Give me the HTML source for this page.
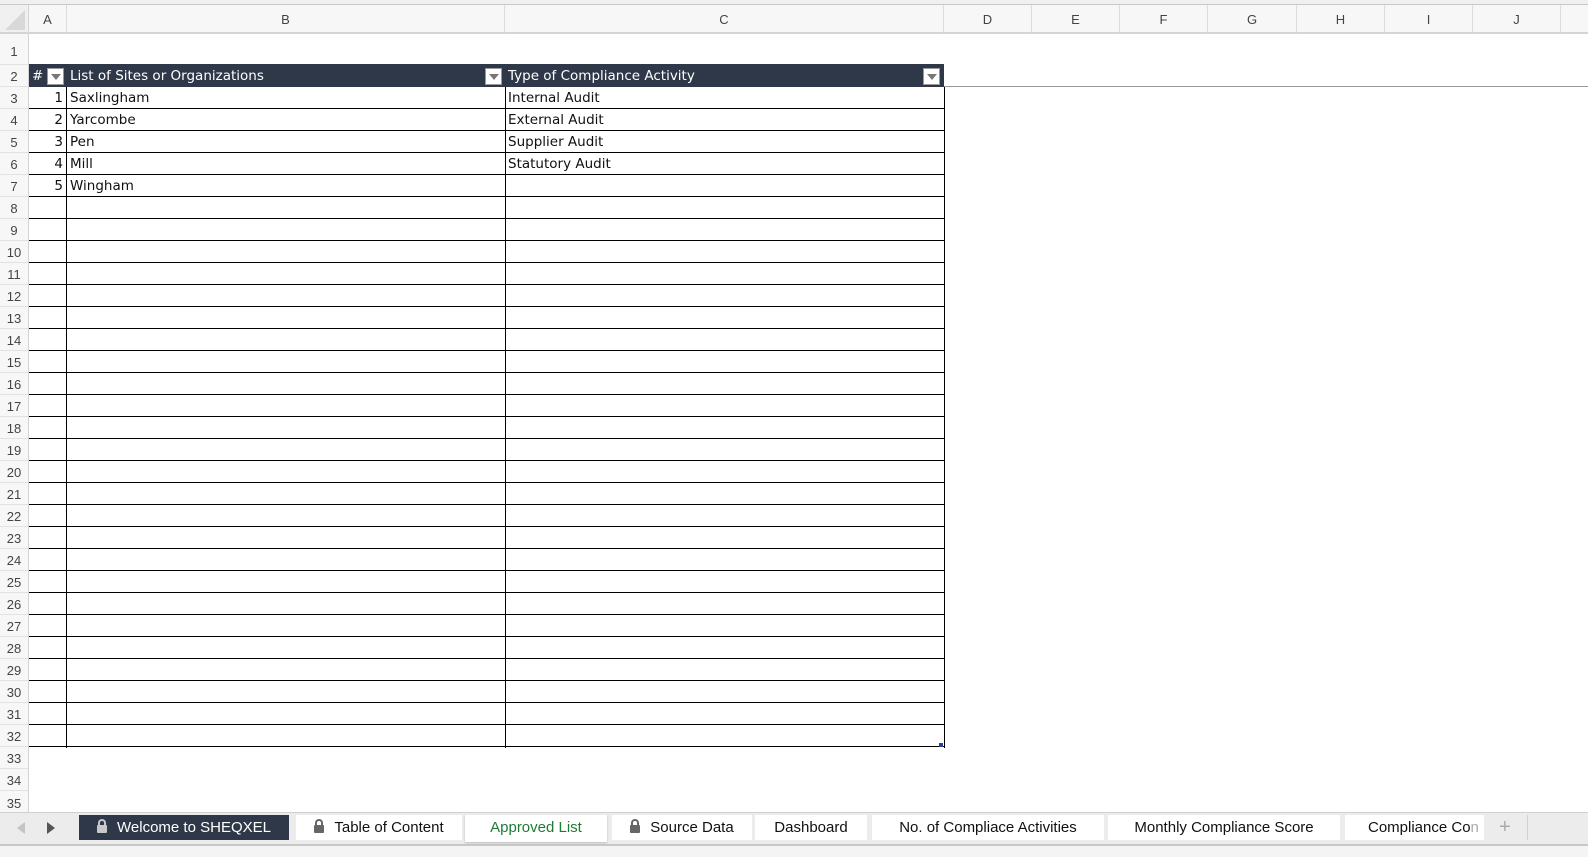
<!DOCTYPE html>
<html><head><meta charset="utf-8">
<style>
*{margin:0;padding:0;box-sizing:border-box}
body{width:1588px;height:857px;overflow:hidden;background:#fff;position:relative;font-family:"Liberation Sans",Arial,sans-serif;}
.a{position:absolute}
.ch{position:absolute;top:5px;height:29px;border-right:1px solid #dcdcdc;background:#f7f7f7;font-size:13px;color:#444;text-align:center;line-height:29px;border-bottom:2px solid #d4d4d4}
.rh{position:absolute;left:0;width:29px;background:#f7f7f7;border-bottom:1px solid #e2e2e2;border-right:1px solid #d4d4d4;font-size:13px;color:#444;text-align:center}
.cell{position:absolute;font-family:"DejaVu Sans","Liberation Sans",sans-serif;font-size:13.5px;color:#111;height:22px;line-height:22px;white-space:nowrap}
.hd{color:#fff}
.dd{position:absolute;top:68px;width:17px;height:17px;background:#fff;border:1px solid #999}
.dd:after{content:"";position:absolute;left:3px;top:5px;border-left:5px solid transparent;border-right:5px solid transparent;border-top:6px solid #777}
.tab{position:absolute;top:815px;height:25px;line-height:25px;font-size:15px;color:#111;text-align:center;background:#fff}
.lock{display:inline-block;width:10px;height:8px;background:currentColor;border-radius:1px;position:relative;margin-right:10px;vertical-align:-1px}
.lock:before{content:"";position:absolute;left:1px;top:-6px;width:8px;height:8px;border:2px solid currentColor;border-bottom:none;border-radius:4px 4px 0 0;box-sizing:border-box}
</style></head><body>
<div class="a" style="left:0;top:0;width:1588px;height:5px;background:#f0f0f0;border-bottom:1px solid #c8c8c8"></div>
<!-- corner -->
<div class="a" style="left:0;top:5px;width:29px;height:29px;background:#f0f0f0;border-right:1px solid #d4d4d4;border-bottom:2px solid #d4d4d4"></div>
<div class="a" style="left:5px;top:10px;width:0;height:0;border-left:20px solid transparent;border-bottom:20px solid #d8d8d8"></div>
<div class="ch" style="left:29px;width:38px">A</div>
<div class="ch" style="left:67px;width:438px">B</div>
<div class="ch" style="left:505px;width:439px">C</div>
<div class="ch" style="left:944px;width:88px">D</div>
<div class="ch" style="left:1032px;width:88px">E</div>
<div class="ch" style="left:1120px;width:88px">F</div>
<div class="ch" style="left:1208px;width:89px">G</div>
<div class="ch" style="left:1297px;width:88px">H</div>
<div class="ch" style="left:1385px;width:88px">I</div>
<div class="ch" style="left:1473px;width:88px">J</div>
<div class="ch" style="left:1561px;width:27px;border-right:none"></div>
<!-- row headers -->
<div class="rh" style="top:34px;height:31px;line-height:36px">1</div>
<div class="rh" style="top:65px;height:22px;line-height:24px">2</div>
<div class="rh" style="top:87px;height:22px;line-height:24px">3</div>
<div class="rh" style="top:109px;height:22px;line-height:24px">4</div>
<div class="rh" style="top:131px;height:22px;line-height:24px">5</div>
<div class="rh" style="top:153px;height:22px;line-height:24px">6</div>
<div class="rh" style="top:175px;height:22px;line-height:24px">7</div>
<div class="rh" style="top:197px;height:22px;line-height:24px">8</div>
<div class="rh" style="top:219px;height:22px;line-height:24px">9</div>
<div class="rh" style="top:241px;height:22px;line-height:24px">10</div>
<div class="rh" style="top:263px;height:22px;line-height:24px">11</div>
<div class="rh" style="top:285px;height:22px;line-height:24px">12</div>
<div class="rh" style="top:307px;height:22px;line-height:24px">13</div>
<div class="rh" style="top:329px;height:22px;line-height:24px">14</div>
<div class="rh" style="top:351px;height:22px;line-height:24px">15</div>
<div class="rh" style="top:373px;height:22px;line-height:24px">16</div>
<div class="rh" style="top:395px;height:22px;line-height:24px">17</div>
<div class="rh" style="top:417px;height:22px;line-height:24px">18</div>
<div class="rh" style="top:439px;height:22px;line-height:24px">19</div>
<div class="rh" style="top:461px;height:22px;line-height:24px">20</div>
<div class="rh" style="top:483px;height:22px;line-height:24px">21</div>
<div class="rh" style="top:505px;height:22px;line-height:24px">22</div>
<div class="rh" style="top:527px;height:22px;line-height:24px">23</div>
<div class="rh" style="top:549px;height:22px;line-height:24px">24</div>
<div class="rh" style="top:571px;height:22px;line-height:24px">25</div>
<div class="rh" style="top:593px;height:22px;line-height:24px">26</div>
<div class="rh" style="top:615px;height:22px;line-height:24px">27</div>
<div class="rh" style="top:637px;height:22px;line-height:24px">28</div>
<div class="rh" style="top:659px;height:22px;line-height:24px">29</div>
<div class="rh" style="top:681px;height:22px;line-height:24px">30</div>
<div class="rh" style="top:703px;height:22px;line-height:24px">31</div>
<div class="rh" style="top:725px;height:22px;line-height:24px">32</div>
<div class="rh" style="top:747px;height:22px;line-height:24px">33</div>
<div class="rh" style="top:769px;height:22px;line-height:24px">34</div>
<div class="rh" style="top:791px;height:22px;line-height:26px">35</div>
<!-- line across row 2 bottom -->
<div class="a" style="left:944px;top:86px;width:644px;height:1px;background:#9a9a9a"></div>
<!-- header -->
<div class="a" style="left:29px;top:64px;width:915px;height:23px;background:#2e3849"></div>
<div class="cell hd" style="left:32px;top:65px">#</div>
<div class="dd" style="left:47px"></div>
<div class="cell hd" style="left:70px;top:65px">List of Sites or Organizations</div>
<div class="dd" style="left:485px"></div>
<div class="cell hd" style="left:508px;top:65px">Type of Compliance Activity</div>
<div class="dd" style="left:923px"></div>
<!-- body grid -->
<div class="a" style="left:29px;top:87px;width:916px;height:661px;border-right:1px solid #000;background:repeating-linear-gradient(to bottom,transparent 0,transparent 21px,#000 21px,#000 22px)"></div>
<div class="a" style="left:66px;top:87px;width:1px;height:661px;background:#000"></div>
<div class="a" style="left:505px;top:87px;width:1px;height:661px;background:#000"></div>
<div class="a" style="left:939px;top:743px;width:4px;height:4px;background:#2b3f9a"></div>
<!-- data -->
<div class="cell" style="left:29px;width:34px;text-align:right;top:87px">1</div>
<div class="cell" style="left:29px;width:34px;text-align:right;top:109px">2</div>
<div class="cell" style="left:29px;width:34px;text-align:right;top:131px">3</div>
<div class="cell" style="left:29px;width:34px;text-align:right;top:153px">4</div>
<div class="cell" style="left:29px;width:34px;text-align:right;top:175px">5</div>
<div class="cell" style="left:70px;top:87px">Saxlingham</div>
<div class="cell" style="left:70px;top:109px">Yarcombe</div>
<div class="cell" style="left:70px;top:131px">Pen</div>
<div class="cell" style="left:70px;top:153px">Mill</div>
<div class="cell" style="left:70px;top:175px">Wingham</div>
<div class="cell" style="left:508px;top:87px">Internal Audit</div>
<div class="cell" style="left:508px;top:109px">External Audit</div>
<div class="cell" style="left:508px;top:131px">Supplier Audit</div>
<div class="cell" style="left:508px;top:153px">Statutory Audit</div>
<!-- tab bar -->
<div class="a" style="left:0;top:812px;width:1588px;height:34px;background:#ececec;border-top:1px solid #d0d0d0;border-bottom:2px solid #c8c8c8"></div>
<div class="a" style="left:0;top:846px;width:1588px;height:11px;background:#f4f4f4"></div>
<div class="a" style="left:17px;top:822px;border-top:6px solid transparent;border-bottom:6px solid transparent;border-right:8px solid #c4c4c4"></div>
<div class="a" style="left:47px;top:822px;border-top:6px solid transparent;border-bottom:6px solid transparent;border-left:8px solid #555"></div>
<div class="tab" style="left:79px;width:210px;background:#2e3849;color:#fff"><span class="lock" style="color:#c8c8c8"></span>Welcome to SHEQXEL</div>
<div class="tab" style="left:296px;width:166px"><span class="lock" style="color:#666"></span>Table of Content</div>
<div class="tab" style="left:465px;width:142px;color:#1e7b34;height:27px;box-shadow:0 1px 2px #bbb">Approved List</div>
<div class="tab" style="left:612px;width:140px"><span class="lock" style="color:#666"></span>Source Data</div>
<div class="tab" style="left:755px;width:112px">Dashboard</div>
<div class="tab" style="left:872px;width:232px">No. of Compliace Activities</div>
<div class="tab" style="left:1108px;width:232px">Monthly Compliance Score</div>
<div class="tab" style="left:1345px;width:139px;overflow:hidden;text-align:left;padding-left:23px;white-space:nowrap">Compliance Co<span style="color:#aaa">n</span></div>
<div class="a" style="left:1499px;top:815px;font-size:20px;color:#aaa;line-height:24px">+</div>
<div class="a" style="left:1527px;top:815px;width:1px;height:25px;background:#d0d0d0"></div>
</body></html>
